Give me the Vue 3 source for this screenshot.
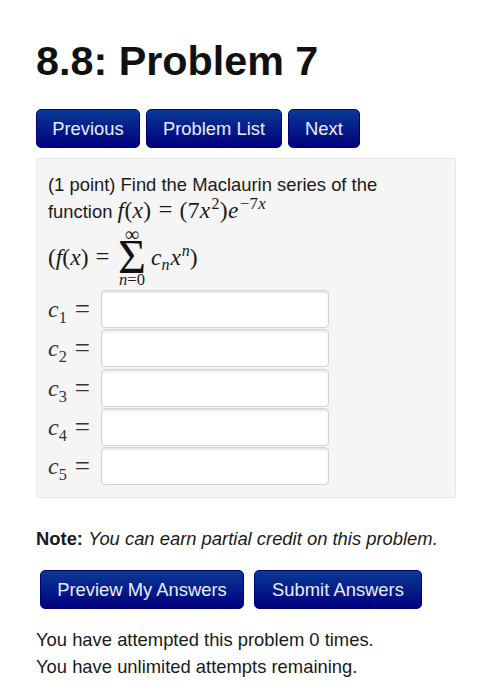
<script setup>
const coefficients = [1, 2, 3, 4, 5]
</script>

<template>
  <main class="page">
    <h1 class="title">8.8: Problem 7</h1>
    <nav class="nav">
      <button class="btn prev">Previous</button>
      <button class="btn list">Problem List</button>
      <button class="btn next">Next</button>
    </nav>
    <section class="well">
      <p class="line">(1 point) Find the Maclaurin series of the</p>
      <p class="line fn">
        function
        <span class="math eq"><i>f</i>(<i>x</i>)<span class="rel">=</span>(7<i>x</i><sup>2</sup>)<i>e</i><sup class="exp">−7<i>x</i></sup></span>
      </p>
      <div class="series math">
        <span class="lhs">(<i>f</i>(<i>x</i>)<span class="rel">=</span></span>
        <span class="sum">
          <span class="lim inf">∞</span>
          <span class="sigma">Σ</span>
          <span class="lim"><i>n</i>=0</span>
        </span>
        <span class="term"><i>c</i><sub><i>n</i></sub><i>x</i><sup><i>n</i></sup>)</span>
      </div>
      <div class="rows">
        <div v-for="n in coefficients" :key="n" class="row">
          <span class="label math"><span class="coef"><i>c</i><sub>{{ n }}</sub></span><span class="equals">=</span></span>
          <input class="field" type="text" />
        </div>
      </div>
    </section>
    <p class="note"><b>Note:</b> <i>You can earn partial credit on this problem.</i></p>
    <div class="actions">
      <button class="btn preview">Preview My Answers</button>
      <button class="btn submit">Submit Answers</button>
    </div>
    <p class="status">You have attempted this problem 0 times.</p>
    <p class="status">You have unlimited attempts remaining.</p>
  </main>
</template>

<style scoped>
.page {
  box-sizing: border-box;
  width: 492px;
  height: 700px;
  padding: 39px 36px 0;
  font-family: "Liberation Sans", Arial, sans-serif;
  color: #1a1a1a;
  overflow: hidden;
}
.title {
  margin: 0;
  font-size: 41.3px;
  line-height: 44px;
  font-weight: 700;
  color: #111;
}
.nav {
  display: flex;
  gap: 6px;
  margin-top: 26px;
}
.btn {
  height: 39px;
  padding: 1px 0 0;
  border: 1px solid #00007a;
  border-radius: 5px;
  background: linear-gradient(#0a3a94, #00007f);
  color: #e8eefa;
  font: 18.4px "Liberation Sans", Arial, sans-serif;
}
.prev { width: 104px; }
.list { width: 136px; }
.next { width: 72px; }
.well {
  box-sizing: border-box;
  width: 420px;
  height: 340px;
  margin-top: 10px;
  padding: 12px 11px 0;
  background: #f5f5f5;
  border: 1px solid #e6e6e6;
  border-radius: 3px;
}
.line {
  height: 27px;
  margin: 0;
  font-size: 18.4px;
  line-height: 27px;
  color: #1a1a1a;
}
.fn { white-space: nowrap; }
.math {
  font-family: "Liberation Serif", "Times New Roman", serif;
}
.eq {
  font-size: 23.5px;
  line-height: 0;
  letter-spacing: 0.3px;
}
.rel {
  margin: 0 7px;
  font-size: 1.05em;
  line-height: 0;
}
i + sup {
  margin-left: 1px;
}
sup, sub {
  font-size: 0.68em;
  line-height: 0;
}
.exp { font-size: 0.72em; }
.series {
  display: flex;
  align-items: center;
  height: 64px;
  font-size: 23.5px;
  color: #1a1a1a;
}
.lhs { width: 70px; white-space: nowrap; }
.sum {
  display: flex;
  flex-direction: column;
  align-items: center;
  width: 28px;
}
.lim {
  font-size: 16.5px;
  line-height: 12px;
  white-space: nowrap;
}
.inf { font-size: 20px; }
.sigma {
  font-size: 48px;
  line-height: 34px;
  color: #111;
}
.term { margin-left: 5px; white-space: nowrap; }
.term sub { margin-right: 1px; }
.rows {
  display: flex;
  flex-direction: column;
  gap: 1.3px;
  margin-top: 1px;
}
.row {
  display: flex;
  align-items: center;
}
.label {
  box-sizing: border-box;
  display: flex;
  align-items: center;
  justify-content: space-between;
  width: 53px;
  padding-right: 11px;
  font-size: 24px;
  line-height: 24px;
  color: #333;
}
.equals { font-size: 27px; line-height: 24px; }
.field {
  box-sizing: border-box;
  width: 228px;
  height: 38px;
  padding: 0 6px;
  background: #fff;
  border: 1px solid #d2d2d2;
  border-radius: 4px;
  box-shadow: inset 0 2px 2px rgba(0, 0, 0, 0.1);
}
.note {
  margin: 30px 0 0;
  font-size: 18.4px;
  line-height: 22px;
  color: #1a1a1a;
}
.actions {
  display: flex;
  gap: 10px;
  margin: 20px 0 0 4px;
}
.preview { width: 204px; }
.submit { width: 168px; }
.status {
  margin: 0;
  font-size: 18.4px;
  line-height: 27px;
  color: #1a1a1a;
}
.actions + .status { margin-top: 17px; }
</style>
